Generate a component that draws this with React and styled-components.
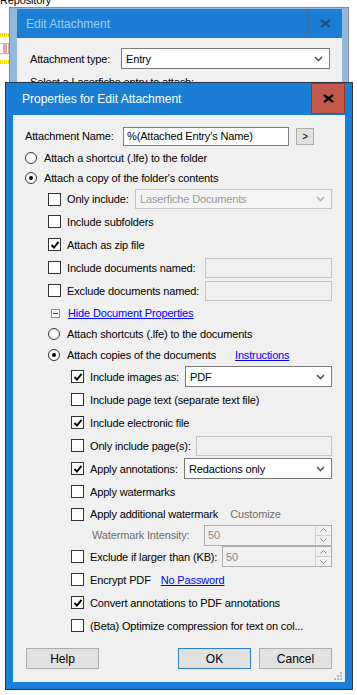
import React from 'react'
import styled, { createGlobalStyle } from 'styled-components'

const GlobalStyle = createGlobalStyle`
  html, body { margin: 0; padding: 0; background: #fff; }
  body { font-family: "Liberation Sans", Arial, sans-serif; }
`

// desktop behind the dialogs
const Desktop = styled.div`
  position: relative;
  width: 357px;
  height: 695px;
  overflow: hidden;
  background: #fff;
  font-size: 11px;
  letter-spacing: -0.15px;
  color: #000;
`

const RepoLabel = styled.div`
  position: absolute;
  left: 0;
  top: -6px;
  font-size: 11px;
  line-height: 13px;
`

const YellowDots = styled.span`
  position: absolute;
  left: 0;
  top: ${p => p.top}px;
  width: 9px;
  height: 4px;
  background: repeating-linear-gradient(90deg, #f2d900 0 1px, #fff7a0 1px 2px);
`

const DeskIcon = styled.span`
  position: absolute;
  left: 0;
  top: 43px;
  width: 8px;
  height: 9px;
  border: 1px solid #b9b9b9;
  border-left: none;
  background: linear-gradient(90deg, #fff 0 3px, #f2a0a0 3px 7px, #fff 7px);
`

// back (inactive) window
const BackWindow = styled.div`
  position: absolute;
  left: 9px;
  top: 7px;
  width: 340px;
  height: 100px;
  box-sizing: border-box;
  border: 1px solid #8a8a8a;
  background: #93b9dc;
  padding: 1px 6px 0 7px;
`

const BackTitle = styled.div`
  display: flex;
  align-items: center;
  height: 29px;
  background: #1a7fd4;
  padding-left: 9px;
  font-size: 12px;
  letter-spacing: 0;
  color: #9ccbf3;
`

const BackClose = styled.div`
  margin-left: auto;
  width: 33px;
  height: 29px;
  border-left: 1px solid #3f6f9c;
  display: flex;
  align-items: center;
  justify-content: center;
`

const BackBody = styled.div`
  background: #f0f0f0;
  height: 70px;
  padding: 10px 12px 0 13px;
`

const BackRow = styled.div`
  display: flex;
  align-items: center;
  height: 21px;
`

const BackNote = styled.div`
  margin-top: 7px;
  line-height: 13px;
`

// front dialog
const Window = styled.div`
  position: absolute;
  left: 5px;
  top: 82px;
  width: 348px;
  height: 608px;
  box-sizing: border-box;
  border: 1px solid #2a3440;
  background: #1a7fd4;
  display: flex;
  flex-direction: column;
`

const TitleBar = styled.div`
  display: flex;
  align-items: flex-start;
  height: 32px;
  padding: 0 7px 0 16px;
`

const TitleText = styled.div`
  font-size: 12px;
  letter-spacing: 0;
  color: #fff;
  line-height: 32px;
`

const CloseButton = styled.div`
  margin-left: auto;
  width: 34px;
  height: 31px;
  box-sizing: border-box;
  background: #c4584c;
  border: 1px solid #8f3b33;
  display: flex;
  align-items: center;
  justify-content: center;
`

const Body = styled.div`
  position: relative;
  margin: 0 7px 7px 7px;
  height: 567px;
  background: #f0f0f0;
  padding-top: 9px;
  box-sizing: border-box;
  display: flex;
  flex-direction: column;
`

const Row = styled.div`
  display: flex;
  align-items: center;
  height: ${p => p.h || 23}px;
  padding-left: ${p => p.indent}px;
  padding-right: 13px;
  flex-shrink: 0;
`

const BoxMark = styled.span`
  width: 13px;
  height: 13px;
  box-sizing: border-box;
  border: 1px solid #333;
  background: #fff;
  display: flex;
  align-items: center;
  justify-content: center;
  flex-shrink: 0;
  margin-right: 6px;
`

const RadioMark = styled.span`
  width: 12px;
  height: 12px;
  box-sizing: border-box;
  border: 1px solid #333;
  border-radius: 50%;
  background: #fff;
  display: flex;
  align-items: center;
  justify-content: center;
  flex-shrink: 0;
  margin-right: 7px;
`

const Dot = styled.span`
  width: 4px;
  height: 4px;
  border-radius: 50%;
  background: #000;
`

const Label = styled.span`
  color: ${p => (p.muted ? '#6d6d6d' : '#000')};
  white-space: nowrap;
`

const Link = styled.span`
  color: #0000ff;
  text-decoration: underline;
  margin-left: ${p => p.gap || 0}px;
  white-space: nowrap;
`

const Muted = styled.span`
  color: #6d6d6d;
  margin-left: ${p => p.gap || 0}px;
`

const TextBox = styled.div`
  margin-left: auto;
  width: ${p => p.w}px;
  height: ${p => p.h || 20}px;
  box-sizing: border-box;
  border: 1px solid ${p => (p.disabled ? '#c4c4c4' : '#7a7a7a')};
  background: ${p => (p.disabled ? '#f0f0f0' : '#fff')};
  color: ${p => (p.disabled ? '#8a8a8a' : '#000')};
  display: flex;
  align-items: center;
  padding-left: 3px;
  font-size: 11px;
`

const Combo = styled(TextBox)`
  justify-content: space-between;
  padding-right: 6px;
  padding-left: 4px;
  background: ${p => (p.disabled ? '#f4f4f4' : '#fff')};
  color: ${p => (p.disabled ? '#9a9a9a' : '#000')};
`

const SmallButton = styled.div`
  margin-left: 7px;
  width: 18px;
  height: 17px;
  box-sizing: border-box;
  border: 1px solid #adadad;
  background: #e1e1e1;
  display: flex;
  align-items: center;
  justify-content: center;
  font-size: 10px;
`

const Spinner = styled(TextBox)`
  padding-left: 0;
  color: #8a8a8a;
  border-color: #adadad;
  align-items: stretch;
`

const SpinText = styled.span`
  flex: 1;
  display: flex;
  align-items: center;
  padding-left: 3px;
`

const SpinButtons = styled.span`
  width: 15px;
  display: flex;
  flex-direction: column;
  border-left: 1px solid #d0d0d0;
`

const SpinHalf = styled.span`
  flex: 1;
  display: flex;
  align-items: center;
  justify-content: center;
  border-bottom: ${p => (p.top ? '1px solid #d0d0d0' : 'none')};
`

const MinusBox = styled.span`
  width: 9px;
  height: 9px;
  box-sizing: border-box;
  border: 1px solid #8c8c8c;
  background: #fff;
  display: flex;
  align-items: center;
  justify-content: center;
  margin-right: 8px;
  &::after {
    content: '';
    width: 5px;
    height: 1px;
    background: #333;
  }
`

const ButtonRow = styled.div`
  display: flex;
  gap: 8px;
  margin-top: 11px;
  padding: 0 13px;
`

const Button = styled.div`
  width: 73px;
  height: 21px;
  box-sizing: border-box;
  border: 1px solid ${p => (p.primary ? '#2f7fc8' : '#adadad')};
  background: #e1e1e1;
  display: flex;
  align-items: center;
  justify-content: center;
  font-size: 12px;
  letter-spacing: 0;
  margin-left: ${p => (p.push ? 'auto' : '0')};
`

const Grip = styled.svg`
  position: absolute;
  right: 3px;
  bottom: 2px;
`

const Check = () => (
  <svg width="10" height="10" viewBox="0 0 10 10">
    <path d="M1.5 5 L4 7.5 L8.5 1.8" fill="none" stroke="#000" strokeWidth="1.9" />
  </svg>
)

const Chevron = ({ color = '#555' }) => (
  <svg width="9" height="6" viewBox="0 0 9 6">
    <path d="M1 1 L4.5 4.5 L8 1" fill="none" stroke={color} strokeWidth="1.6" />
  </svg>
)

const Arrow = ({ up }) => (
  <svg width="7" height="4" viewBox="0 0 7 4">
    <path d={up ? 'M0.5 3.5 L3.5 0.5 L6.5 3.5' : 'M0.5 0.5 L3.5 3.5 L6.5 0.5'} fill="none" stroke="#8a8a8a" strokeWidth="1" />
  </svg>
)

const CloseX = ({ color }) => (
  <svg width="11" height="9" viewBox="0 0 11 9">
    <path d="M1 0.8 L10 8.2 M10 0.8 L1 8.2" stroke={color} strokeWidth="2.2" />
  </svg>
)

const CheckRow = ({ indent, h, checked, children }) => (
  <Row indent={indent} h={h}>
    <BoxMark>{checked && <Check />}</BoxMark>
    {children}
  </Row>
)

const RadioRow = ({ indent, h, on, children }) => (
  <Row indent={indent} h={h}>
    <RadioMark>{on && <Dot />}</RadioMark>
    {children}
  </Row>
)

const SpinBox = ({ w, value }) => (
  <Spinner w={w} h={21} disabled>
    <SpinText>{value}</SpinText>
    <SpinButtons>
      <SpinHalf top><Arrow up /></SpinHalf>
      <SpinHalf><Arrow /></SpinHalf>
    </SpinButtons>
  </Spinner>
)

export default function App() {
  return (
    <Desktop>
      <GlobalStyle />
      <RepoLabel>Repository</RepoLabel>
      <YellowDots top={33} />
      <DeskIcon />
      <YellowDots top={60} />

      <BackWindow>
        <BackTitle>
          Edit Attachment
          <BackClose><CloseX color="#1d5288" /></BackClose>
        </BackTitle>
        <BackBody>
          <BackRow>
            <Label>Attachment type:</Label>
            <Combo w={209} h={21}>
              <span>Entry</span>
              <Chevron />
            </Combo>
          </BackRow>
          <BackNote>Select a Laserfiche entry to attach:</BackNote>
        </BackBody>
      </BackWindow>

      <Window>
        <TitleBar>
          <TitleText>Properties for Edit Attachment</TitleText>
          <CloseButton><CloseX color="#000" /></CloseButton>
        </TitleBar>
        <Body>
          <Row indent={12} h={24} style={{ paddingRight: 31 }}>
            <Label>Attachment Name:</Label>
            <TextBox w={166} h={19}>%(Attached Entry's Name)</TextBox>
            <SmallButton>&gt;</SmallButton>
          </Row>
          <RadioRow indent={12} h={20}>
            <Label>Attach a shortcut (.lfe) to the folder</Label>
          </RadioRow>
          <RadioRow indent={12} h={20} on>
            <Label>Attach a copy of the folder's contents</Label>
          </RadioRow>
          <CheckRow indent={35} h={22}>
            <Label>Only include:</Label>
            <Combo w={197} h={20} disabled>
              <span>Laserfiche Documents</span>
              <Chevron color="#b5b5b5" />
            </Combo>
          </CheckRow>
          <CheckRow indent={35}>
            <Label>Include subfolders</Label>
          </CheckRow>
          <CheckRow indent={35} checked>
            <Label>Attach as zip file</Label>
          </CheckRow>
          <CheckRow indent={35}>
            <Label>Include documents named:</Label>
            <TextBox w={127} h={20} disabled />
          </CheckRow>
          <CheckRow indent={35}>
            <Label>Exclude documents named:</Label>
            <TextBox w={127} h={20} disabled />
          </CheckRow>
          <Row indent={38} h={22}>
            <MinusBox />
            <Link>Hide Document Properties</Link>
          </Row>
          <RadioRow indent={35} h={20}>
            <Label>Attach shortcuts (.lfe) to the documents</Label>
          </RadioRow>
          <RadioRow indent={35} h={21} on>
            <Label>Attach copies of the documents</Label>
            <Link gap={19}>Instructions</Link>
          </RadioRow>
          <CheckRow indent={58} checked>
            <Label>Include images as:</Label>
            <Combo w={147} h={21}>
              <span>PDF</span>
              <Chevron />
            </Combo>
          </CheckRow>
          <CheckRow indent={58}>
            <Label>Include page text (separate text file)</Label>
          </CheckRow>
          <CheckRow indent={58} checked>
            <Label>Include electronic file</Label>
          </CheckRow>
          <CheckRow indent={58}>
            <Label>Only include page(s):</Label>
            <TextBox w={136} h={20} disabled />
          </CheckRow>
          <CheckRow indent={58} checked>
            <Label>Apply annotations:</Label>
            <Combo w={148} h={21}>
              <span>Redactions only</span>
              <Chevron />
            </Combo>
          </CheckRow>
          <CheckRow indent={58}>
            <Label>Apply watermarks</Label>
          </CheckRow>
          <CheckRow indent={58} h={22}>
            <Label>Apply additional watermark</Label>
            <Muted gap={12}>Customize</Muted>
          </CheckRow>
          <Row indent={79} h={20}>
            <Label muted>Watermark Intensity:</Label>
            <SpinBox w={128} value="50" />
          </Row>
          <CheckRow indent={58}>
            <Label>Exclude if larger than (KB):</Label>
            <SpinBox w={110} value="50" />
          </CheckRow>
          <CheckRow indent={58}>
            <Label>Encrypt PDF</Label>
            <Link gap={10}>No Password</Link>
          </CheckRow>
          <CheckRow indent={58} checked>
            <Label>Convert annotations to PDF annotations</Label>
          </CheckRow>
          <CheckRow indent={58}>
            <Label>(Beta) Optimize compression for text on col...</Label>
          </CheckRow>
          <ButtonRow>
            <Button>Help</Button>
            <Button primary push>OK</Button>
            <Button>Cancel</Button>
          </ButtonRow>
          <Grip width="8" height="8" viewBox="0 0 8 8">
            <g fill="#b8b8b8">
              <rect x="6" y="0" width="2" height="2" />
              <rect x="3" y="3" width="2" height="2" />
              <rect x="6" y="3" width="2" height="2" />
              <rect x="0" y="6" width="2" height="2" />
              <rect x="3" y="6" width="2" height="2" />
              <rect x="6" y="6" width="2" height="2" />
            </g>
          </Grip>
        </Body>
      </Window>
    </Desktop>
  )
}
